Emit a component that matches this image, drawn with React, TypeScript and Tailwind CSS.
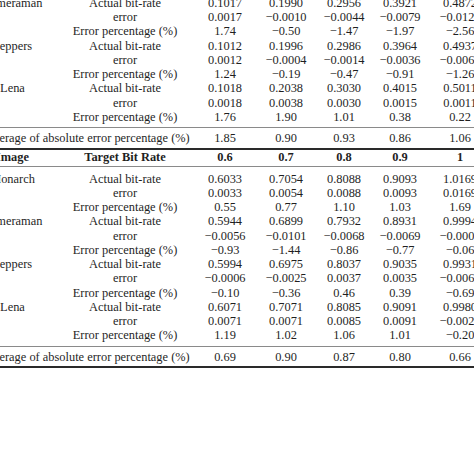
const COLS = "grid grid-cols-[75px_150px_50px_72px_44px_68px_52px] items-center text-center";

type Row = { img?: string; label: string; vals: string[] };

const LABELS = ["Actual bit-rate", "error", "Error percentage (%)"];

const block = (data: [string, string[][]][]): Row[] =>
  data.flatMap(([img, rows]) =>
    rows.map((vals, i) => ({ img: i === 0 ? img : undefined, label: LABELS[i], vals }))
  );

const top = block([
  [
    "Cameraman",
    [
      ["0.1017", "0.1990", "0.2956", "0.3921", "0.4872"],
      ["0.0017", "−0.0010", "−0.0044", "−0.0079", "−0.0128"],
      ["1.74", "−0.50", "−1.47", "−1.97", "−2.56"],
    ],
  ],
  [
    "Peppers",
    [
      ["0.1012", "0.1996", "0.2986", "0.3964", "0.4937"],
      ["0.0012", "−0.0004", "−0.0014", "−0.0036", "−0.0063"],
      ["1.24", "−0.19", "−0.47", "−0.91", "−1.26"],
    ],
  ],
  [
    "Lena",
    [
      ["0.1018", "0.2038", "0.3030", "0.4015", "0.5011"],
      ["0.0018", "0.0038", "0.0030", "0.0015", "0.0011"],
      ["1.76", "1.90", "1.01", "0.38", "0.22"],
    ],
  ],
]);

const bottom = block([
  [
    "Monarch",
    [
      ["0.6033", "0.7054", "0.8088", "0.9093", "1.0169"],
      ["0.0033", "0.0054", "0.0088", "0.0093", "0.0169"],
      ["0.55", "0.77", "1.10", "1.03", "1.69"],
    ],
  ],
  [
    "Cameraman",
    [
      ["0.5944", "0.6899", "0.7932", "0.8931", "0.9994"],
      ["−0.0056", "−0.0101", "−0.0068", "−0.0069", "−0.0006"],
      ["−0.93", "−1.44", "−0.86", "−0.77", "−0.06"],
    ],
  ],
  [
    "Peppers",
    [
      ["0.5994", "0.6975", "0.8037", "0.9035", "0.9931"],
      ["−0.0006", "−0.0025", "0.0037", "0.0035", "−0.0069"],
      ["−0.10", "−0.36", "0.46", "0.39", "−0.69"],
    ],
  ],
  [
    "Lena",
    [
      ["0.6071", "0.7071", "0.8085", "0.9091", "0.9980"],
      ["0.0071", "0.0071", "0.0085", "0.0091", "−0.0020"],
      ["1.19", "1.02", "1.06", "1.01", "−0.20"],
    ],
  ],
]);

const DataRow = ({ r }: { r: Row }) => (
  <div className={`${COLS} h-[14.25px]`}>
    <div className="whitespace-nowrap">{r.img}</div>
    <div className="whitespace-nowrap">{r.label}</div>
    {r.vals.map((v, i) => (
      <div key={i} className="whitespace-nowrap">{v}</div>
    ))}
  </div>
);

const AvgRow = ({ vals }: { vals: string[] }) => (
  <div className={`${COLS} h-[14.25px]`}>
    <div className="col-span-2 whitespace-nowrap">Average of absolute error percentage (%)</div>
    {vals.map((v, i) => (
      <div key={i} className="whitespace-nowrap">{v}</div>
    ))}
  </div>
);

const Thin = () => <div className="h-px bg-[#8a8a8a] my-[3px]" />;
const Thick = () => <div className="h-[2px] mt-[2px] bg-[#2a2a2a]" />;

export default function App() {
  return (
    <div className="w-[474px] h-[474px] overflow-hidden bg-white">
      <div
        className="w-[511px] -ml-[25px] -mt-[4px] text-[12.4px] leading-none text-[#1f1f1f]"
        style={{ fontFamily: '"Liberation Serif", "DejaVu Serif", serif' }}
      >
        {top.map((r, i) => (
          <DataRow key={i} r={r} />
        ))}
        <Thin />
        <AvgRow vals={["1.85", "0.90", "0.93", "0.86", "1.06"]} />
        <Thick />
        <div className={`${COLS} h-[14.25px] mt-[1px] font-bold`}>
          <div>Image</div>
          <div className="whitespace-nowrap">Target Bit Rate</div>
          <div>0.6</div>
          <div>0.7</div>
          <div>0.8</div>
          <div>0.9</div>
          <div>1</div>
        </div>
        <div className="h-px bg-[#8a8a8a] mt-[1px] mb-[5px]" />
        {bottom.map((r, i) => (
          <DataRow key={i} r={r} />
        ))}
        <Thin />
        <AvgRow vals={["0.69", "0.90", "0.87", "0.80", "0.66"]} />
        <Thick />
      </div>
    </div>
  );
}
